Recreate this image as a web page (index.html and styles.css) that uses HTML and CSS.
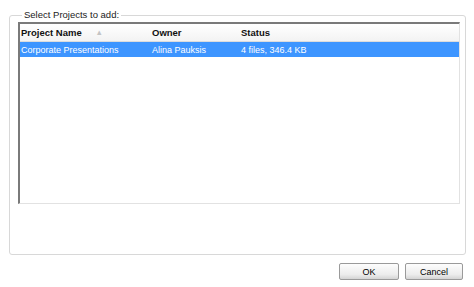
FILE: index.html
```html
<!DOCTYPE html>
<html>
<head>
<meta charset="utf-8">
<link rel="stylesheet" href="styles.css">
</head>
<body>
<div class="dialog">
  <fieldset class="group">
    <legend class="legend">Select Projects to add:</legend>
    <div class="list">
      <div class="row header">
        <div class="cell c1">Project Name <span class="sort">▲</span></div>
        <div class="cell c2">Owner</div>
        <div class="cell c3">Status</div>
      </div>
      <div class="row selected">
        <div class="cell c1">Corporate Presentations</div>
        <div class="cell c2">Alina Pauksis</div>
        <div class="cell c3">4 files, 346.4 KB</div>
      </div>
    </div>
  </fieldset>
  <div class="buttons">
    <button class="btn ok">OK</button>
    <button class="btn cancel">Cancel</button>
  </div>
</div>
</body>
</html>
```
FILE: styles.css
```css
html, body {
  margin: 0;
  padding: 0;
  background: #ffffff;
}
body {
  font-family: "Liberation Sans", Arial, sans-serif;
  font-size: 9px;
  color: #000;
}
.dialog {
  width: 474px;
  height: 287px;
  padding: 9px 8px 0 9px;
  box-sizing: border-box;
}
.group {
  margin: 0;
  width: 457px;
  height: 246px;
  box-sizing: border-box;
  border: 1px solid #d8d8d8;
  border-radius: 3px;
  padding: 0 5px 0 8px;
}
.legend {
  padding: 0 2px;
  margin-left: 4px;
  font-size: 9.5px;
  line-height: 12px;
  color: #222;
}
.list {
  margin-top: 1px;
  width: 442px;
  height: 182px;
  box-sizing: border-box;
  border-top: 2px solid #7a7a7a;
  border-left: 2px solid #7a7a7a;
  border-right: 1px solid #e2e2e2;
  border-bottom: 1px solid #e2e2e2;
  background: #fff;
}
.row {
  display: flex;
  height: 16px;
  align-items: center;
}
.header {
  height: 17px;
  font-weight: bold;
  font-size: 9.5px;
  background: linear-gradient(#ffffff, #f3f3f3);
  border-bottom: 1px solid #dcdcdc;
  color: #111;
}
.selected {
  height: 15px;
  background: #3d95ff;
  color: #fff;
}
.cell {
  padding-left: 1px;
  white-space: nowrap;
}
.c1 { width: 130px; }
.c2 { width: 88px; }
.c3 { flex: 1; }
.sort {
  color: #c4c4c4;
  font-size: 7.5px;
  font-weight: normal;
  margin-left: 11px;
  vertical-align: 1px;
}
.buttons {
  display: flex;
  justify-content: flex-end;
  gap: 6px;
  margin-top: 8px;
  padding-right: 3px;
}
.btn {
  height: 17px;
  padding: 0;
  font-family: "Liberation Sans", Arial, sans-serif;
  font-size: 9px;
  color: #000;
  border: 1px solid #9a9a9a;
  border-radius: 2px;
  background: linear-gradient(#fdfdfd, #ececec 70%, #d4d4d4);
}
.ok { width: 60px; }
.cancel { width: 58px; }
```
